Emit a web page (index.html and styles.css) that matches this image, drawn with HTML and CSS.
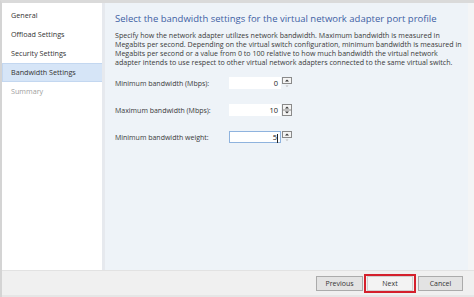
FILE: index.html
```html
<!DOCTYPE html>
<html>
<head>
<meta charset="utf-8">
<link rel="stylesheet" href="styles.css">
</head>
<body>
<div class="window">
  <div class="main">
    <nav class="sidebar">
      <div class="nav-item">General</div>
      <div class="nav-item">Offload Settings</div>
      <div class="nav-item">Security Settings</div>
      <div class="nav-item active">Bandwidth Settings</div>
      <div class="nav-item disabled">Summary</div>
    </nav>
    <section class="content">
      <h1 class="title">Select the bandwidth settings for the virtual network adapter port profile</h1>
      <p class="desc">
        <span class="line">Specify how the network adapter utilizes network bandwidth. Maximum bandwidth is measured in</span>
        <span class="line">Megabits per second. Depending on the virtual switch configuration, minimum bandwidth is measured in</span>
        <span class="line">Megabits per second or a value from 0 to 100 relative to how much bandwidth the virtual network</span>
        <span class="line">adapter intends to use respect to other virtual network adapters connected to the same virtual switch.</span>
      </p>
      <div class="fields">
        <div class="field">
          <label class="label">Minimum bandwidth (Mbps):</label>
          <div class="spin">
            <div class="input">0</div>
            <svg class="arrows" width="10" height="12" viewBox="0 0 10 12"><rect x="0.5" y="0.5" width="9" height="6" fill="#f4f4f4" stroke="#8a8a8a"/><path d="M3 4.5 L5 2.5 L7 4.5 Z" fill="#333"/><path d="M3.5 8.5 L5 10 L6.5 8.5 Z" fill="#bbb"/></svg>
          </div>
        </div>
        <div class="field">
          <label class="label">Maximum bandwidth (Mbps):</label>
          <div class="spin">
            <div class="input">10</div>
            <svg class="arrows" width="10" height="12" viewBox="0 0 10 12"><rect x="0.5" y="0.5" width="9" height="11" fill="#f4f4f4" stroke="#8a8a8a"/><line x1="0.5" y1="6" x2="9.5" y2="6" stroke="#8a8a8a"/><path d="M3 4.5 L5 2.5 L7 4.5 Z" fill="#333"/><path d="M3 7.5 L5 9.5 L7 7.5 Z" fill="#333"/></svg>
          </div>
        </div>
        <div class="field">
          <label class="label">Minimum bandwidth weight:</label>
          <div class="spin">
            <div class="input focused">5<span class="caret"></span></div>
            <svg class="arrows" width="10" height="12" viewBox="0 0 10 12"><rect x="0.5" y="0.5" width="9" height="6" fill="#f4f4f4" stroke="#8a8a8a"/><path d="M3 4.5 L5 2.5 L7 4.5 Z" fill="#333"/><path d="M3.5 8.5 L5 10 L6.5 8.5 Z" fill="#bbb"/></svg>
          </div>
        </div>
      </div>
    </section>
  </div>
  <footer class="footer">
    <button class="btn prev">Previous</button>
    <span class="highlight"><button class="btn">Next</button></span>
    <button class="btn cancel">Cancel</button>
  </footer>
</div>
</body>
</html>
```

FILE: styles.css
```css
html, body {
  margin: 0;
  padding: 0;
  background: #f7f7f7;
}
body {
  font-family: "Open Sans", "Noto Sans", sans-serif;
  color: #333;
}
.window {
  width: 474px;
  height: 297px;
  box-sizing: border-box;
  border-top: 3px solid #dadada;
  border-left: 2px solid #d4d4d4;
  display: flex;
  flex-direction: column;
  background: #f7f7f7;
}
.main {
  display: flex;
  height: 267px;
  flex-shrink: 0;
  border-bottom: 1px solid #e2e2e2;
}
.sidebar {
  width: 100px;
  flex-shrink: 0;
  background: #ffffff;
  border-right: 3px solid #e6e9ee;
  padding-top: 3px;
  display: flex;
  flex-direction: column;
}
.nav-item {
  height: 17px;
  line-height: 17px;
  font-size: 7.2px;
  padding-left: 8px;
  color: #333;
  border: 1px solid transparent;
  border-right: 0;
}
.nav-item.active {
  background: #d6e5f7;
  border-color: #c3d7f0;
}
.nav-item.disabled {
  color: #a0a0a0;
}
.content {
  flex: 1;
  min-width: 0;
  background: #eef3f8;
  border-right: 6px solid #f4f5f6;
  padding-left: 10px;
}
.title {
  margin: 9px 0 0 0;
  font-size: 9.5px;
  font-weight: normal;
  color: #3e5fa4;
  white-space: nowrap;
}
.desc {
  margin: 6px 0 0 0;
  font-size: 7.1px;
  line-height: 9px;
  color: #3a3a3a;
}
.line {
  display: block;
  white-space: nowrap;
}
.fields {
  margin-top: 10px;
  display: flex;
  flex-direction: column;
  gap: 15px;
}
.field {
  display: flex;
  align-items: center;
  height: 12px;
}
.label {
  width: 114px;
  font-size: 7px;
  color: #3a3a3a;
}
.spin {
  display: flex;
  align-items: flex-start;
}
.input {
  width: 52px;
  height: 12px;
  box-sizing: border-box;
  background: #fff;
  border: 1px solid #fff;
  font-size: 7.5px;
  line-height: 10px;
  text-align: right;
  padding-right: 2px;
  color: #222;
}
.input.focused {
  border-color: #8fb3de;
}
.caret {
  display: inline-block;
  width: 1px;
  height: 9px;
  background: #222;
  vertical-align: middle;
}
.arrows {
  display: block;
  margin-left: 1px;
}
.footer {
  flex: 1;
  display: flex;
  align-items: center;
  justify-content: flex-end;
  padding-right: 11px;
  background: #f0f0f0;
  border-bottom: 2px solid #e6e6e6;
}
.btn {
  font-family: "Open Sans", "Noto Sans", sans-serif;
  font-size: 7px;
  color: #333;
  height: 15px;
  padding: 0;
  background: #e3e3e3;
  border: 1px solid #ababab;
  border-radius: 0;
  box-sizing: border-box;
}
.btn.prev { width: 47px; }
.btn.cancel { width: 45px; }
.highlight {
  display: flex;
  margin: 0 2px 0 1px;
  border: 2px solid #d4202c;
  padding: 0 1px;
  width: 52px;
  height: 19px;
  box-sizing: border-box;
  align-items: center;
}
.highlight .btn {
  width: 46px;
  height: 15px;
  background: #f3f3f3;
  border-color: #d0d0d0;
}
```
